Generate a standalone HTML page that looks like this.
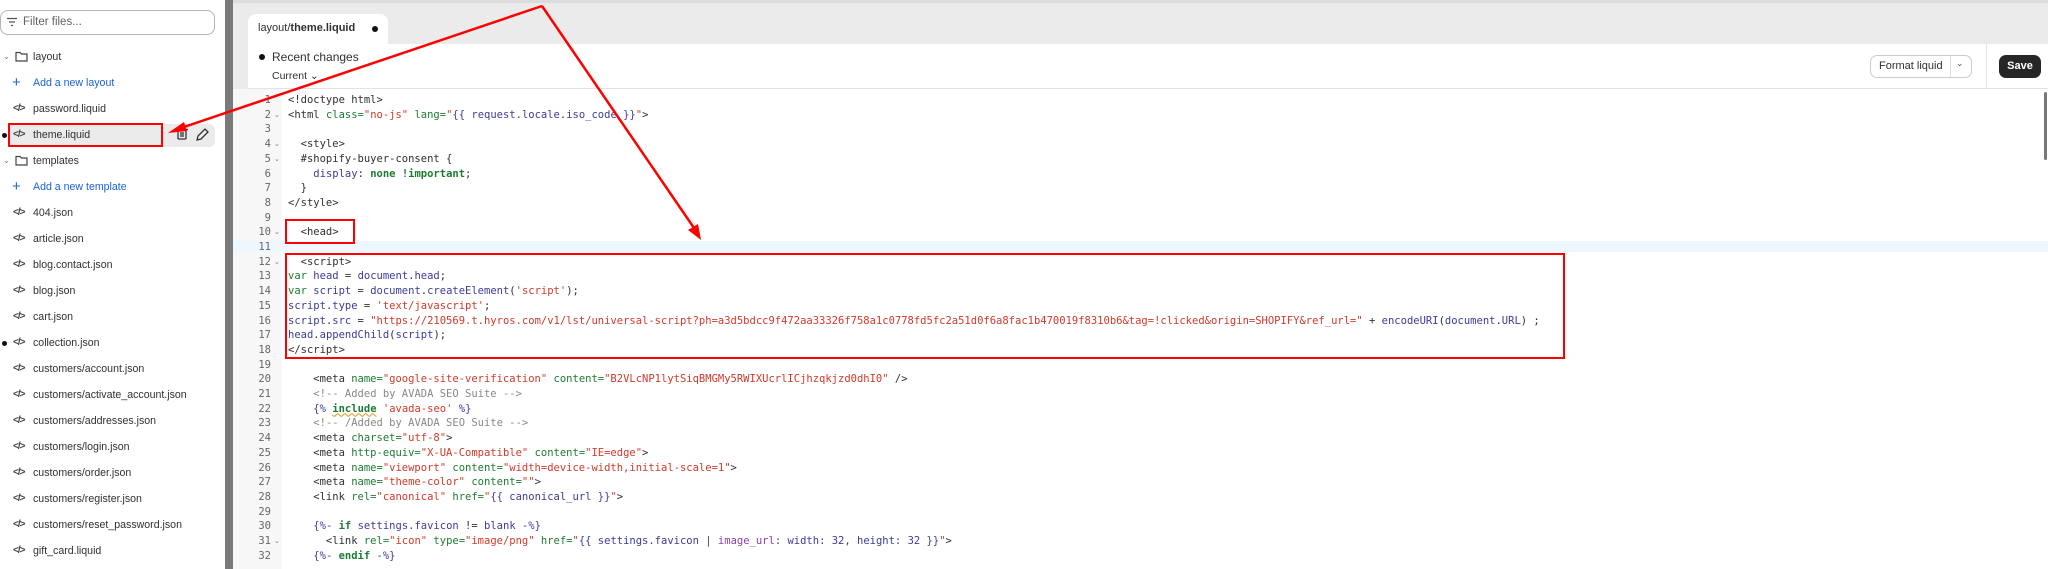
<!DOCTYPE html>
<html><head><meta charset="utf-8"><style>
*{margin:0;padding:0;box-sizing:border-box}
body{width:2048px;height:569px;overflow:hidden;background:#ebebeb;font-family:"Liberation Sans",sans-serif;position:relative}
.abs{position:absolute}
#side{left:0;top:0;width:225px;height:569px;background:#fff}
.row{position:absolute;left:0;height:24px;width:215px;font-size:10.6px;color:#303030;line-height:24px}
.row .t{position:absolute;left:33px}
.row .ic{position:absolute;left:13px;font-size:10px;font-weight:bold;letter-spacing:-1px;color:#444}
.add{color:#1a63d6}
#sb{left:225px;top:0;width:8px;height:569px;background:#7a7a7a}
#ed{left:248px;top:44px;width:1800px;height:525px;background:#fff}
.code{position:absolute;left:288px;font-family:"DejaVu Sans Mono","Liberation Mono",monospace;font-size:10.5px;white-space:pre;color:#303030;line-height:14.7px}
.ln{position:absolute;left:240px;width:31px;text-align:right;font-family:"DejaVu Sans Mono",monospace;font-size:10.5px;color:#666;line-height:14.7px}
.fd{position:absolute;left:274px;font-size:7px;color:#777}
.g{color:#1e7b34}.s{color:#d03a2a}.p{color:#3c3c9a}.c{color:#888}.b{font-weight:bold;color:#1e7b34}.l{color:#3c3c9a}.m{color:#8a3fb0}
</style></head><body>
<div class="abs" style="left:0;top:0;width:2048px;height:3px;background:#dcdcdc"></div>
<div id="side" class="abs">
 <div class="abs" style="left:0;top:10px;width:215px;height:25px;border:1px solid #b5b5b5;border-radius:8px"></div>
 <svg class="abs" style="left:6px;top:17px" width="12" height="10"><path d="M1 1.5H11M3 5H9M5 8.5H7" stroke="#555" stroke-width="1.3"/></svg>
 <div class="abs" style="left:23px;top:16px;font-size:11.5px;color:#616161">Filter files...</div>
 <div class="abs" style="left:8px;top:124px;width:207px;height:23px;background:#ebebeb;border-radius:6px"></div>
</div>
<div id="rows"></div>
<div id="sb" class="abs"></div>
<div class="abs" style="left:248px;top:14px;width:140px;height:32px;background:#fff;border-radius:8px 8px 0 0"></div>
<div class="abs" style="left:258px;top:22px;font-size:11px;color:#303030">layout/<b>theme.liquid</b></div>
<div class="abs" style="left:372px;top:26px;width:6px;height:6px;border-radius:3px;background:#111"></div>
<div id="ed" class="abs"></div>
<div class="abs" style="left:248px;top:88px;width:1800px;height:1px;background:#e3e3e3"></div>
<div class="abs" style="left:1986px;top:44px;width:1px;height:45px;background:#e3e3e3"></div>
<div class="abs" style="left:259px;top:54px;width:6px;height:6px;border-radius:3px;background:#111"></div>
<div class="abs" style="left:272px;top:50px;font-size:12px;color:#303030">Recent changes</div>
<div class="abs" style="left:272px;top:70px;font-size:10.5px;color:#303030">Current ⌄</div>
<div class="abs" style="left:1870px;top:55px;width:102px;height:23px;border:1px solid #ccc;border-radius:7px;font-size:11px;color:#303030;line-height:21px;padding-left:8px">Format liquid</div>
<div class="abs" style="left:1950px;top:56px;width:1px;height:21px;background:#ddd"></div>
<div class="abs" style="left:1956px;top:58px;font-size:9px;color:#555">⌄</div>
<div class="abs" style="left:1999px;top:55px;width:42px;height:23px;background:#262626;border-radius:7px;font-size:11px;color:#fff;line-height:23px;text-align:center;font-weight:bold">Save</div>
<div class="abs" style="left:2044px;top:92px;width:3px;height:68px;background:#777;border-radius:2px"></div>
<div class="abs" style="left:233px;top:89px;width:49px;height:480px;background:#f7f7f7"></div>
<div class="abs" style="left:233px;top:241px;width:1815px;height:11px;background:#eef7ff"></div>
<div id="code"></div>
<div class="abs" style="left:8px;top:123px;width:155px;height:24px;border:2px solid #f00"></div>
<div class="abs" style="left:285px;top:219px;width:70px;height:25px;border:2px solid #f00"></div>
<div class="abs" style="left:285px;top:253px;width:1280px;height:106px;border:2px solid #f00"></div>
<svg class="abs" style="left:0;top:0" width="2048" height="569">
<g fill="none" stroke="#333" stroke-width="1.3">
<rect x="178" y="130" width="8" height="9" rx="1"/><path d="M176 129.5h12M180 129v-2h4v2M181 132v5M183 132v5"/>
<path d="M197 140l1-4 7-7 3 3-7 7z"/>
</g>
<g stroke="#f00" stroke-width="2.5" fill="#f00">
<line x1="542" y1="6" x2="178" y2="129"/><polygon points="168,133 184,122 187,131" stroke="none"/>
<line x1="542" y1="6" x2="694" y2="228"/><polygon points="701,240 688,230 698,224" stroke="none"/>
</g></svg>
<script>
var rows=[["f","layout"],["a","Add a new layout"],["c","password.liquid"],["c","theme.liquid"],["f","templates"],["a","Add a new template"],["c","404.json"],["c","article.json"],["c","blog.contact.json"],["c","blog.json"],["c","cart.json"],["c","collection.json"],["c","customers/account.json"],["c","customers/activate_account.json"],["c","customers/addresses.json"],["c","customers/login.json"],["c","customers/order.json"],["c","customers/register.json"],["c","customers/reset_password.json"],["c","gift_card.liquid"]];
var h="";rows.forEach(function(r,i){var y=45+i*26;var ic="";
if(r[0]=="f")ic='<span style="position:absolute;left:3px;font-size:8px;color:#777">⌄</span><svg style="position:absolute;left:15px;top:6px" width="13" height="11"><path d="M1 1.5h4l1.5 1.5H12v7H1z" fill="none" stroke="#444" stroke-width="1.2"/></svg>';
else if(r[0]=="a")ic='<span style="position:absolute;left:12px;font-size:15px;color:#1a63d6">+</span>';
else ic='<span class="ic">&lt;/&gt;</span>';
if(i==3||i==11)ic+='<span style="position:absolute;left:2px;top:10px;width:5px;height:5px;border-radius:3px;background:#111"></span>';
h+='<div class="row'+(r[0]=="a"?" add":"")+'" style="top:'+y+'px">'+ic+'<span class="t">'+r[1]+'</span></div>';});
document.getElementById("rows").innerHTML=h;
var L=[
'&lt;!doctype html&gt;',
'&lt;html <span class="g">class=</span><span class="s">"no-js"</span> <span class="g">lang=</span><span class="s">"</span><span class="p">{{ request.locale.iso_code }}</span><span class="s">"</span>&gt;',
'',
'  &lt;style&gt;',
'  #shopify-buyer-consent {',
'    <span class="l">display</span>: <span class="b">none !important</span>;',
'  }',
'&lt;/style&gt;',
'',
'  &lt;head&gt;',
'',
'  &lt;script&gt;',
'<span class="g">var</span> <span class="l">head</span> = <span class="l">document</span>.<span class="l">head</span>;',
'<span class="g">var</span> <span class="l">script</span> = <span class="l">document</span>.<span class="l">createElement</span>(<span class="s">\'script\'</span>);',
'<span class="l">script</span>.<span class="l">type</span> = <span class="s">\'text/javascript\'</span>;',
'<span class="l">script</span>.<span class="l">src</span> = <span class="s">"https://210569.t.hyros.com/v1/lst/universal-script?ph=a3d5bdcc9f472aa33326f758a1c0778fd5fc2a51d0f6a8fac1b470019f8310b6&amp;tag=!clicked&amp;origin=SHOPIFY&amp;ref_url="</span> + <span class="l">encodeURI</span>(<span class="l">document</span>.<span class="l">URL</span>) ;',
'<span class="l">head</span>.<span class="l">appendChild</span>(<span class="l">script</span>);',
'&lt;/script&gt;',
'',
'    &lt;meta <span class="g">name=</span><span class="s">"google-site-verification"</span> <span class="g">content=</span><span class="s">"B2VLcNP1lytSiqBMGMy5RWIXUcrlICjhzqkjzd0dhI0"</span> /&gt;',
'    <span class="c">&lt;!-- Added by AVADA SEO Suite --&gt;</span>',
'    <span class="p">{%</span> <span class="b" style="text-decoration:underline wavy #e0a030">include</span> <span class="s">\'avada-seo\'</span> <span class="p">%}</span>',
'    <span class="c">&lt;!-- /Added by AVADA SEO Suite --&gt;</span>',
'    &lt;meta <span class="g">charset=</span><span class="s">"utf-8"</span>&gt;',
'    &lt;meta <span class="g">http-equiv=</span><span class="s">"X-UA-Compatible"</span> <span class="g">content=</span><span class="s">"IE=edge"</span>&gt;',
'    &lt;meta <span class="g">name=</span><span class="s">"viewport"</span> <span class="g">content=</span><span class="s">"width=device-width,initial-scale=1"</span>&gt;',
'    &lt;meta <span class="g">name=</span><span class="s">"theme-color"</span> <span class="g">content=</span><span class="s">""</span>&gt;',
'    &lt;link <span class="g">rel=</span><span class="s">"canonical"</span> <span class="g">href=</span><span class="s">"</span><span class="p">{{ canonical_url }}</span><span class="s">"</span>&gt;',
'',
'    <span class="p">{%-</span> <span class="b">if</span> <span class="l">settings.favicon</span> != <span class="l">blank</span> <span class="p">-%}</span>',
'      &lt;link <span class="g">rel=</span><span class="s">"icon"</span> <span class="g">type=</span><span class="s">"image/png"</span> <span class="g">href=</span><span class="s">"</span><span class="p">{{ settings.favicon | <span class="m">image_url</span>: width: 32, height: 32 }}</span><span class="s">"</span>&gt;',
'    <span class="p">{%-</span> <span class="b">endif</span> <span class="p">-%}</span>'];
var c="",folds=[2,4,5,10,12,31];
L.forEach(function(s,i){var y=93+i*14.7;c+='<div class="ln" style="top:'+y+'px">'+(i+1)+'</div><div class="code" style="top:'+y+'px">'+s+'</div>';
if(folds.indexOf(i+1)>=0)c+='<div class="fd" style="top:'+(y+3)+'px">⌄</div>';});
document.getElementById("code").innerHTML=c;
</script>
</body></html>
